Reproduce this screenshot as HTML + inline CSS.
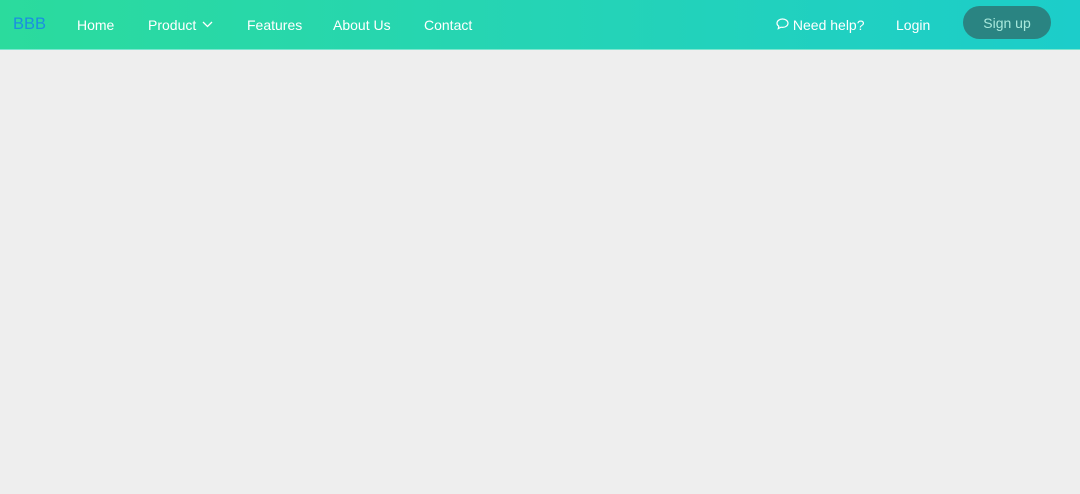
<!DOCTYPE html>
<html><head><meta charset="utf-8"><style>
html,body{margin:0;padding:0;width:1080px;height:494px;background:#eeeeee;overflow:hidden;font-family:"Liberation Sans",sans-serif;}
.nav{position:absolute;left:0;top:0;width:1080px;height:49px;background:linear-gradient(90deg,#2bdb9d 0%,#25d4b5 50%,#1ccdca 100%);border-bottom:1px solid #7be6cf;}
.t{position:absolute;top:17px;font-size:14px;color:#fff;line-height:17px;white-space:nowrap;}
.logo{left:13px;color:#1a8fe0;font-size:16.5px;top:16px;}
.btn{position:absolute;left:963px;top:6px;width:88px;height:33px;border-radius:17px;background:#2a8482;color:#a8e8dc;font-size:14px;line-height:34px;text-align:center;}
</style></head><body>
<div class="nav">
<div class="t logo">BBB</div>
<div class="t" style="left:77px">Home</div>
<div class="t" style="left:148px">Product <svg width="11" height="7" viewBox="0 0 11 7" style="margin-left:2px;vertical-align:2px"><path d="M1 1l4.5 4.5L10 1" fill="none" stroke="#fff" stroke-width="1.3"/></svg></div>
<div class="t" style="left:247px">Features</div>
<div class="t" style="left:333px">About Us</div>
<div class="t" style="left:424px">Contact</div>
<div class="t" style="left:776px"><svg width="13" height="12" viewBox="0 0 13 12" style="vertical-align:0px"><path d="M6.5 1C3.4 1 1 2.9 1 5.2c0 1.2.7 2.3 1.8 3L2.3 10.6l2.6-1.4c.5.1 1 .2 1.6.2 3.1 0 5.5-1.9 5.5-4.2S9.6 1 6.5 1z" fill="none" stroke="#fff" stroke-width="1.2"/></svg> Need help?</div>
<div class="t" style="left:896px">Login</div>
<div class="btn">Sign up</div>
</div>
</body></html>
